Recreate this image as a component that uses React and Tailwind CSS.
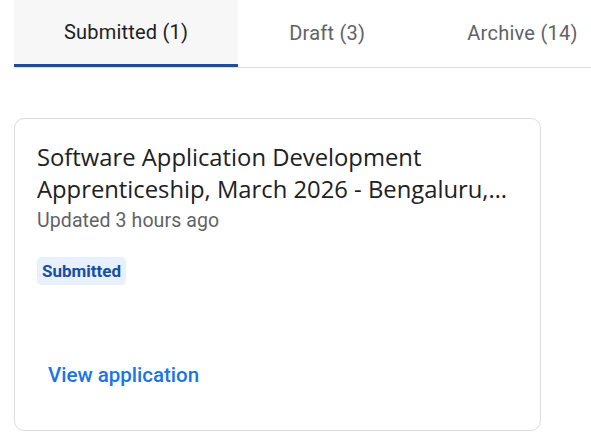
export default function App() {
  const tabs = [
    { label: "Submitted (1)", active: true },
    { label: "Draft (3)" },
    { label: "Archive (14)" },
  ];
  return (
    <div className="w-[591px] h-[434px] overflow-hidden bg-white" style={{ fontFamily: "Roboto, 'Liberation Sans', sans-serif" }}>
      <div className="pl-[14px]">
        <div className="flex border-b border-[#dadce0] whitespace-nowrap">
          {tabs.map((t) => (
            <div
              key={t.label}
              className={
                t.active
                  ? "shrink-0 h-[67px] px-[50px] flex items-center justify-center bg-[#f7f7f7] border-b-[3px] border-[#1a4fa6] -mb-px text-[20px] tracking-[0.2px] text-[#202124]"
                  : "shrink-0 h-[67px] px-[51px] flex items-center justify-center text-[20px] tracking-[0.25px] text-[#5f6368] pb-[2px]"
              }
            >
              {t.label}
            </div>
          ))}
        </div>
      </div>
      <div className="pl-[14px] pt-[50px] w-[541px]">
        <div className="h-[313px] rounded-[10px] border border-[#dadce0] px-[22px] pt-[22px] flex flex-col">
          <div
            className="text-[23.8px] leading-[32px] text-[#202124] line-clamp-2"
            style={{ fontFamily: "'Open Sans', Roboto, sans-serif" }}
          >
            Software Application Development Apprenticeship, March 2026 - Bengaluru, India
          </div>
          <div className="mt-[3px] text-[19.5px] leading-[26px] tracking-[0.1px] text-[#5f6368]">Updated 3 hours ago</div>
          <div className="mt-[23px] flex">
            <span className="rounded-[5px] bg-[#e8f0fe] text-[#174ea6] font-bold text-[17px] leading-[28px] px-[5px]">
              Submitted
            </span>
          </div>
          <div className="mt-[76px] pl-[11px] text-[20.5px] leading-[28px] font-medium text-[#1a73e8]">View application</div>
        </div>
      </div>
    </div>
  );
}
